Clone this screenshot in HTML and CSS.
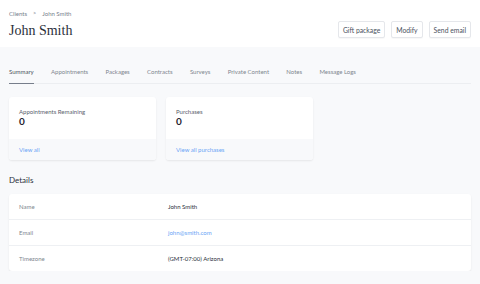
FILE: index.html
```html
<!DOCTYPE html>
<html lang="en">
<head>
    <meta charset="UTF-8">
    <meta name="viewport" content="width=device-width, initial-scale=1.0">
    <title>John Smith</title>
    <link rel="stylesheet" href="styles.css">
</head>
<body>

<div class="header">
    <div class="header-left">
        <div class="breadcrumb">
            <span>Clients</span>
            <span class="crumb-sep">&gt;</span>
            <span>John Smith</span>
        </div>
        <h1 class="client-name">John Smith</h1>
    </div>
    <div class="actions">
        <button class="btn">Gift package</button>
        <button class="btn">Modify</button>
        <button class="btn">Send email</button>
    </div>
</div>

<div class="content">
    <div class="tabs">
        <div class="tab active">Summary</div>
        <div class="tab">Appointments</div>
        <div class="tab">Packages</div>
        <div class="tab">Contracts</div>
        <div class="tab">Surveys</div>
        <div class="tab">Private Content</div>
        <div class="tab">Notes</div>
        <div class="tab">Message Logs</div>
    </div>

    <div class="stats">
        <div class="stat-card">
            <div class="stat-body">
                <div class="stat-label">Appointments Remaining</div>
                <div class="stat-value">0</div>
            </div>
            <div class="stat-footer"><a href="#">View all</a></div>
        </div>
        <div class="stat-card">
            <div class="stat-body">
                <div class="stat-label">Purchases</div>
                <div class="stat-value">0</div>
            </div>
            <div class="stat-footer"><a href="#">View all purchases</a></div>
        </div>
    </div>

    <h2 class="section-title">Details</h2>
    <div class="details">
        <div class="detail-row">
            <div class="detail-label">Name</div>
            <div class="detail-value">John Smith</div>
        </div>
        <div class="detail-row">
            <div class="detail-label">Email</div>
            <div class="detail-value"><a href="#">john@smith.com</a></div>
        </div>
        <div class="detail-row">
            <div class="detail-label">Timezone</div>
            <div class="detail-value">(GMT-07:00) Arizona</div>
        </div>
    </div>
</div>

</body>
</html>
```

FILE: styles.css
```css
body {
    font-family: Lato, "Open Sans", sans-serif;
    margin: 0;
    padding: 0;
    background-color: #f8f9fb;
    color: #1f2430;
}
.header {
    background-color: white;
    height: 47px;
    padding: 0 9px;
    display: flex;
    justify-content: space-between;
    align-items: flex-end;
    box-sizing: border-box;
}
.header-left {
    padding-bottom: 8px;
}
.breadcrumb {
    font-size: 6px;
    color: #777e8b;
    display: flex;
    gap: 6px;
    margin-bottom: 5px;
}
.crumb-sep {
    font-size: 5.5px;
}
.client-name {
    font-family: "Liberation Serif", serif;
    font-weight: normal;
    font-size: 14px;
    margin: 0;
    line-height: 17px;
    color: #2a2f3a;
}
.actions {
    display: flex;
    gap: 6px;
    padding-bottom: 9px;
}
.btn {
    font-family: Lato, sans-serif;
    font-size: 6.8px;
    color: #4b5260;
    background-color: white;
    border: 1px solid #e5e7eb;
    border-radius: 2px;
    height: 17px;
    padding: 0 4px;
    box-shadow: 0 1px 1px rgba(0, 0, 0, 0.03);
}
.content {
    padding: 0 9px;
}
.tabs {
    display: flex;
    gap: 17.3px;
    border-bottom: 1px solid #eceef1;
    margin-top: 19px;
}
.tab {
    font-size: 6px;
    color: #80868f;
    padding: 2px 0 8px;
    border-bottom: 1px solid transparent;
    margin-bottom: -1px;
}
.tab.active {
    color: #4b5260;
    border-bottom-color: #777e8b;
}
.stats {
    display: flex;
    gap: 10px;
    margin-top: 13px;
}
.stat-card {
    width: 147px;
    background-color: white;
    border-radius: 3px;
    box-shadow: 0 1px 2px rgba(0, 0, 0, 0.08);
    overflow: hidden;
}
.stat-body {
    height: 42px;
    padding: 11px 10px 0;
    box-sizing: border-box;
}
.stat-label {
    font-size: 6px;
    color: #5a616d;
}
.stat-value {
    font-size: 10px;
    font-weight: bold;
    line-height: 12px;
    color: #1f2430;
}
.stat-footer {
    background-color: #f8f9fb;
    height: 21px;
    padding: 0 10px;
    display: flex;
    align-items: center;
}
a {
    color: #6aa5f5;
    text-decoration: none;
    font-size: 6px;
}
.section-title {
    font-size: 8px;
    font-weight: normal;
    margin: 15px 0 9px;
    color: #2a2f3a;
}
.details {
    background-color: white;
    border-radius: 3px;
    box-shadow: 0 1px 2px rgba(0, 0, 0, 0.08);
}
.detail-row {
    display: flex;
    align-items: center;
    height: 25px;
    padding: 0 10px;
    border-bottom: 1px solid #eef0f3;
    font-size: 6px;
}
.detail-row:last-child {
    border-bottom: none;
}
.detail-label {
    width: 149px;
    color: #80868f;
}
.detail-value {
    color: #2a2f3a;
}
```
